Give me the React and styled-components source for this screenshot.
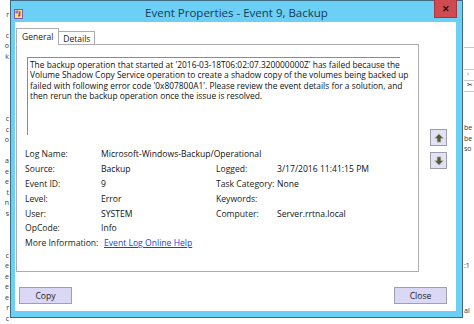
import styled, { createGlobalStyle } from 'styled-components';

const GlobalStyle = createGlobalStyle`
  html, body { margin: 0; padding: 0; background: #fff; }
  body { font-family: "Open Sans", "Noto Sans", sans-serif; color: #1b1b1b; }
  * { box-sizing: border-box; }
`;

const leftBits = ['r', '', 'c', 'o', 'k', '', '', '', '', '', 'c', 'c', 'o', '', 'a', 'e', 'e', 't', 'n', 's', '', '', '', 'c', 'e', 'e', 'e', 'e', 'r', 'c'];

const description = [
  "The backup operation that started at '2016-03-18T06:02:07.320000000Z' has failed because the",
  'Volume Shadow Copy Service operation to create a shadow copy of the volumes being backed up',
  "failed with following error code '0x807800A1'. Please review the event details for a solution, and",
  'then rerun the backup operation once the issue is resolved.',
];

const fields = [
  { label: 'Log Name:', value: 'Microsoft-Windows-Backup/Operational', wide: true },
  { label: 'Source:', value: 'Backup', label2: 'Logged:', value2: '3/17/2016 11:41:15 PM' },
  { label: 'Event ID:', value: '9', label2: 'Task Category:', value2: 'None' },
  { label: 'Level:', value: 'Error', label2: 'Keywords:', value2: '' },
  { label: 'User:', value: 'SYSTEM', label2: 'Computer:', value2: 'Server.rrtna.local' },
  { label: 'OpCode:', value: 'Info', label2: '', value2: '' },
];

function ArrowIcon({ down }) {
  return (
    <svg width="10" height="10" viewBox="0 0 10 10" style={{ transform: down ? 'rotate(180deg)' : 'none' }}>
      <polygon points="5,0.8 9.6,5.4 6.9,5.4 6.9,9.2 3.1,9.2 3.1,5.4 0.4,5.4" fill="#4f5d3c" stroke="#c9cfb8" strokeWidth="0.6" />
    </svg>
  );
}

function AppIcon() {
  return (
    <svg width="9" height="10" viewBox="0 0 9 10">
      <rect x="0.5" y="0.5" width="8" height="9" fill="#f7e27a" stroke="#7a5fb0" />
      <rect x="1.5" y="1.5" width="3" height="3" fill="#8f7ad0" />
      <path d="M5.5 2 L6.5 2 L6.5 6.5 L5 8 L4 7 Z" fill="#d2452f" />
    </svg>
  );
}

export default function App() {
  return (
    <>
      <GlobalStyle />
      <Desktop>
        <LeftStrip>
          {leftBits.map((b, i) => (
            <StripLine key={i}>{b}</StripLine>
          ))}
        </LeftStrip>

        <Window>
          <TitleBar>
            <TitleIcon><AppIcon /></TitleIcon>
            <Title>Event Properties - Event 9, Backup</Title>
            <CloseX>✕</CloseX>
          </TitleBar>

          <Client>
            <Body>
              <TabArea>
                <TabStrip>
                  <Tab $active>General</Tab>
                  <Tab>Details</Tab>
                </TabStrip>
                <Panel>
                  <DescBox>
                    {description.map((line) => (
                      <DescLine key={line}>{line}</DescLine>
                    ))}
                  </DescBox>
                  <Fields>
                    {fields.map((f) => (
                      <Row key={f.label}>
                        <Label>{f.label}</Label>
                        {f.wide ? (
                          <Value $span>{f.value}</Value>
                        ) : (
                          <>
                            <Value>{f.value}</Value>
                            <Label>{f.label2}</Label>
                            <Value>{f.value2}</Value>
                          </>
                        )}
                      </Row>
                    ))}
                    <Row>
                      <Label>More Information:</Label>
                      <Link $span>Event Log Online Help</Link>
                    </Row>
                  </Fields>
                </Panel>
              </TabArea>

              <SideButtons>
                <ArrowButton><ArrowIcon /></ArrowButton>
                <ArrowButton><ArrowIcon down /></ArrowButton>
              </SideButtons>
            </Body>

            <Footer>
              <DialogButton>Copy</DialogButton>
              <DialogButton>Close</DialogButton>
            </Footer>
          </Client>
        </Window>

        <RightStrip>
          <GridLine $top={47} />
          <GridLine $top={21}>›</GridLine>
          <GridLine $top={10} $dark>✂</GridLine>
          <GridLine $top={10} />
          <Frag $top={31}>be</Frag>
          <Frag>be</Frag>
          <Frag>so</Frag>
          <Frag $top={106}>:1</Frag>
          <Frag $top={35}>al</Frag>
        </RightStrip>
      </Desktop>
    </>
  );
}

const Desktop = styled.div`
  display: flex;
  width: 474px;
  height: 324px;
  overflow: hidden;
  background: #fff;
`;

const LeftStrip = styled.div`
  width: 10px;
  flex: none;
  display: flex;
  flex-direction: column;
  padding-top: 10px;
  overflow: hidden;
  font-size: 7px;
  line-height: 10.5px;
  color: #3a3a3a;
`;

const StripLine = styled.div`
  display: flex;
  justify-content: flex-end;
  height: 10.5px;
  padding-right: 1px;
`;

const Window = styled.div`
  width: 453px;
  height: 318px;
  flex: none;
  display: flex;
  flex-direction: column;
  background: #6ccff5;
  border: 1px solid #3d6c82;
`;

const TitleBar = styled.div`
  height: 21px;
  flex: none;
  display: grid;
  grid-template-columns: 1fr auto 1fr;
  align-items: center;
`;

const TitleIcon = styled.div`
  justify-self: start;
  display: flex;
  padding-left: 3px;
  margin-top: 4px;
`;

const Title = styled.div`
  font-size: 11.5px;
  color: #173a57;
  padding-top: 2px;
`;

const CloseX = styled.div`
  justify-self: end;
  align-self: start;
  width: 23px;
  height: 18px;
  margin: -1px 5px 0 0;
  background: #cf4a51;
  border: 1px solid #a8353b;
  border-top: none;
  color: #2a0c0c;
  font-size: 9px;
  font-weight: 700;
  display: flex;
  align-items: center;
  justify-content: center;
`;

const Client = styled.div`
  flex: 1;
  margin: 0 6px 6px 4px;
  background: #fff;
  display: flex;
  flex-direction: column;
  padding: 6px 0 0 1px;
`;

const Body = styled.div`
  display: flex;
  gap: 11px;
`;

const TabArea = styled.div`
  width: 403px;
  display: flex;
  flex-direction: column;
`;

const TabStrip = styled.div`
  display: flex;
  align-items: flex-end;
  height: 17px;
  margin-bottom: -1px;
  position: relative;
  z-index: 1;
`;

const Tab = styled.div`
  height: ${(p) => (p.$active ? '17px' : '14px')};
  padding: 0 ${(p) => (p.$active ? '5px' : '4px')};
  display: flex;
  align-items: center;
  font-size: 8.5px;
  background: #fff;
  border: 1px solid #adadad;
  border-bottom: ${(p) => (p.$active ? '1px solid #fff' : '1px solid #adadad')};
  margin-left: ${(p) => (p.$active ? '0' : '-1px')};
`;

const Panel = styled.div`
  height: 228px;
  border: 1px solid #adadad;
  padding: 12px 0 0 10px;
`;

const DescBox = styled.div`
  width: 373px;
  height: 78px;
  border-top: 1px solid #8c8c8c;
  border-left: 1px solid #8c8c8c;
  padding: 2px 0 0 2px;
  font-size: 8.4px;
  line-height: 10.4px;
  color: #111;
`;

const DescLine = styled.div`
  white-space: nowrap;
`;

const Fields = styled.div`
  margin: 12px 0 0 -2px;
  display: flex;
  flex-direction: column;
`;

const Row = styled.div`
  display: grid;
  grid-template-columns: 76px 115px 61px 1fr;
  height: 14.8px;
  align-items: center;
  font-size: 8.6px;
  white-space: nowrap;
`;

const Label = styled.div`
  color: #222;
`;

const Value = styled.div`
  color: #111;
  grid-column: ${(p) => (p.$span ? 'span 3' : 'auto')};
`;

const Link = styled.div`
  color: #1c3fd4;
  text-decoration: underline;
  padding-left: 3px;
  grid-column: ${(p) => (p.$span ? 'span 3' : 'auto')};
`;

const SideButtons = styled.div`
  display: flex;
  flex-direction: column;
  gap: 6px;
  margin-top: 101px;
`;

const ArrowButton = styled.div`
  width: 17px;
  height: 17px;
  border: 1px solid #9c9cab;
  background: #e3e1f6;
  display: flex;
  align-items: center;
  justify-content: center;
`;

const Footer = styled.div`
  display: flex;
  justify-content: space-between;
  margin-top: 15px;
  padding: 0 9px 0 3px;
`;

const DialogButton = styled.div`
  width: 53px;
  height: 17px;
  border: 1px solid #9f9fb2;
  background: #dbd8f6;
  font-size: 8.6px;
  display: flex;
  align-items: center;
  justify-content: center;
  color: #1b1b1b;
`;

const RightStrip = styled.div`
  flex: 1;
  display: flex;
  flex-direction: column;
  overflow: hidden;
  font-size: 7px;
  line-height: 10.5px;
  color: #333;
  padding-left: 1px;
`;

const GridLine = styled.div`
  margin-top: ${(p) => p.$top}px;
  border-top: 1px solid #c8c8c8;
  height: 1px;
  font-size: 7px;
  line-height: 7px;
  color: ${(p) => (p.$dark ? '#111' : '#777')};
  padding-left: 3px;
`;

const Frag = styled.div`
  margin-top: ${(p) => p.$top || 0}px;
  white-space: nowrap;
`;
